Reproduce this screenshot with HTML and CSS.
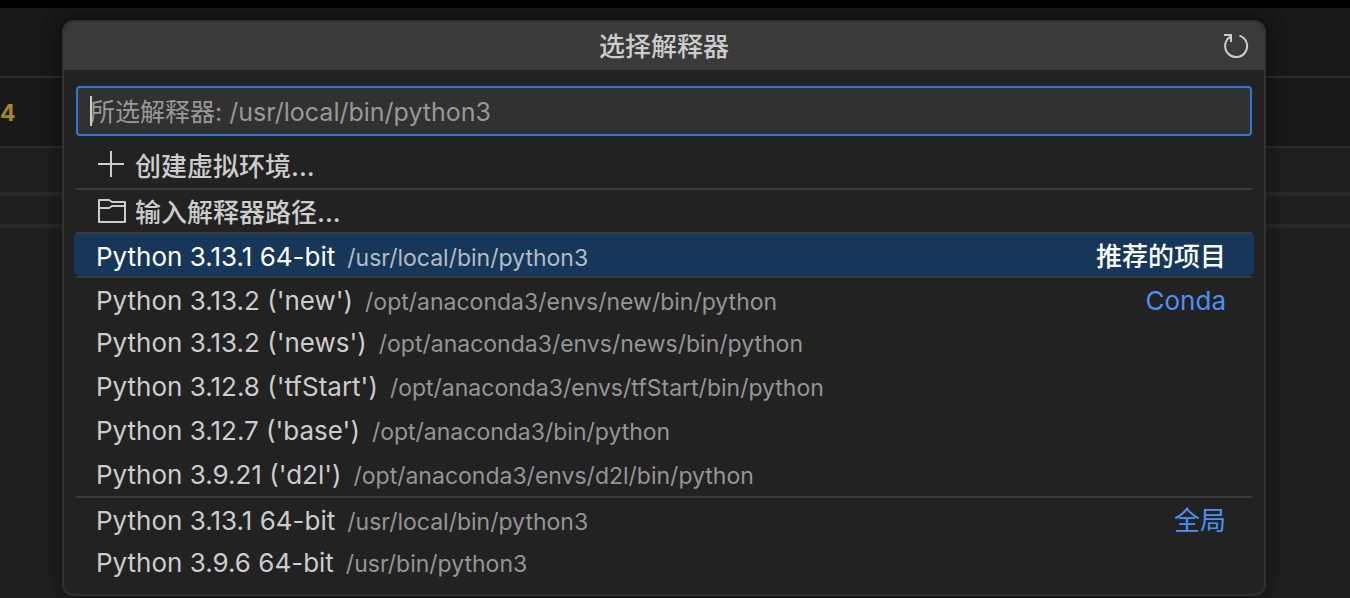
FILE: index.html
```html
<!DOCTYPE html>
<html lang="zh-CN">
<head>
  <meta charset="UTF-8">
  <title>选择解释器</title>
  <link rel="stylesheet" href="styles.css">
</head>
<body>
  <div class="editor">
    <div class="title-bar"></div>
    <div class="tab-bar"><span class="tab-badge">4</span></div>
    <div class="code-area">
      <div class="code-line"></div>
    </div>
  </div>

  <div class="overlay">
    <div class="quick-pick">
      <header class="pick-header">
        <h1 class="pick-title">选择解释器</h1>
        <button class="refresh-btn" aria-label="刷新">
          <svg width="28" height="28" viewBox="0 0 28 28" fill="none" stroke="currentColor" stroke-width="2">
            <path d="M17.5 3.6A11 11 0 1 1 8.5 4.6"/>
            <path d="M2 3H9V10"/>
          </svg>
        </button>
      </header>

      <div class="pick-filter">
        <input class="pick-input" type="text" placeholder="所选解释器: /usr/local/bin/python3" aria-label="所选解释器">
        <span class="caret"></span>
      </div>

      <ul class="pick-list">
        <li><button class="pick-row">
          <svg class="row-icon" width="30" height="30" viewBox="0 0 30 30" fill="none" stroke="currentColor" stroke-width="2">
            <path d="M15 0V26M2 13H28"/>
          </svg>
          <span class="label action">创建虚拟环境...</span>
        </button></li>
        <li><button class="pick-row separated">
          <svg class="row-icon" width="30" height="30" viewBox="0 0 30 30" fill="none" stroke="currentColor" stroke-width="2" stroke-linejoin="round">
            <path d="M3 4H13L16 6H29V26H3Z"/>
            <path d="M3 12H13L16 10H29"/>
          </svg>
          <span class="label action">输入解释器路径...</span>
        </button></li>
        <li><button class="pick-row separated selected">
          <span class="label">Python 3.13.1 64-bit</span>
          <span class="path">/usr/local/bin/python3</span>
          <span class="group">推荐的项目</span>
        </button></li>
        <li><button class="pick-row separated">
          <span class="label">Python 3.13.2 ('new')</span>
          <span class="path">/opt/anaconda3/envs/new/bin/python</span>
          <span class="group">Conda</span>
        </button></li>
        <li><button class="pick-row">
          <span class="label">Python 3.13.2 ('news')</span>
          <span class="path">/opt/anaconda3/envs/news/bin/python</span>
        </button></li>
        <li><button class="pick-row">
          <span class="label">Python 3.12.8 ('tfStart')</span>
          <span class="path">/opt/anaconda3/envs/tfStart/bin/python</span>
        </button></li>
        <li><button class="pick-row">
          <span class="label">Python 3.12.7 ('base')</span>
          <span class="path">/opt/anaconda3/bin/python</span>
        </button></li>
        <li><button class="pick-row">
          <span class="label">Python 3.9.21 ('d2l')</span>
          <span class="path">/opt/anaconda3/envs/d2l/bin/python</span>
        </button></li>
        <li><button class="pick-row separated">
          <span class="label">Python 3.13.1 64-bit</span>
          <span class="path">/usr/local/bin/python3</span>
          <span class="group">全局</span>
        </button></li>
        <li><button class="pick-row">
          <span class="label">Python 3.9.6 64-bit</span>
          <span class="path">/usr/bin/python3</span>
        </button></li>
      </ul>
    </div>
  </div>
</body>
</html>
```
FILE: styles.css
```css
* {
  box-sizing: border-box;
}

body {
  margin: 0;
  background: #1f1f1f;
  color: #cccccc;
  font-family: Inter, "Noto Sans CJK SC", sans-serif;
  font-size: 26px;
  overflow: hidden;
}

button,
input {
  font: inherit;
  color: inherit;
}

/* editor behind the picker */
.editor {
  display: flex;
  flex-direction: column;
  height: 100vh;
  border-top: 8px solid #000000;
}

.title-bar,
.tab-bar {
  height: 70px;
  background: #181818;
  border-bottom: 2px solid #2b2b2b;
}

.tab-bar {
  display: flex;
  align-items: center;
}

.tab-badge {
  padding-top: 2px;
  font-size: 23px;
  font-weight: bold;
  color: #a1882c;
}

.code-area {
  flex: 1;
  padding-top: 44px;
}

.code-line {
  height: 36px;
  border: solid #282828;
  border-width: 4px 0;
}

.overlay {
  position: absolute;
  top: 0;
  left: 0;
  right: 0;
  padding: 20px 84px 0 62px;
}

.quick-pick {
  background: #222222;
  border: 2px solid #313131;
  border-radius: 12px;
  box-shadow: 0 0 16px 4px rgba(0, 0, 0, 0.36);
  padding-bottom: 10px;
}

.pick-header {
  display: flex;
  align-items: center;
  height: 48px;
  padding: 0 14px 0 42px;
  background: #3a3a3a;
  border-radius: 10px 10px 0 0;
}

.pick-title {
  flex: 1;
  margin: 0;
  padding-top: 2px;
  font-size: 26px;
  font-weight: 500;
  line-height: 44px;
  text-align: center;
}

.refresh-btn {
  display: flex;
  padding: 0;
  border: none;
  background: none;
  cursor: pointer;
}

.pick-filter {
  position: relative;
  margin: 16px 12px 8px;
}

.pick-input {
  display: block;
  width: 100%;
  height: 50px;
  padding: 2px 12px 0;
  background: #313131;
  border: 2px solid #3376cd;
  border-radius: 4px;
  outline: none;
  font-size: 25px;
  caret-color: transparent;
}

.pick-input::placeholder {
  color: #989898;
  opacity: 1;
}

.caret {
  position: absolute;
  top: 10px;
  left: 14px;
  width: 2px;
  height: 30px;
  background: #cccccc;
}

.pick-list {
  list-style: none;
  margin: 0;
  padding: 0 10px;
}

.pick-row {
  position: relative;
  display: flex;
  align-items: baseline;
  width: 100%;
  height: 44px;
  padding: 0 28px 0 22px;
  border: none;
  background: none;
  line-height: 46px;
  text-align: left;
  white-space: nowrap;
  cursor: pointer;
}

.separated {
  padding-top: 2px;
}

.separated::before {
  content: "";
  position: absolute;
  top: 0;
  left: 2px;
  right: 2px;
  height: 2px;
  background: #3c3c3c;
  border-radius: 2px 2px 0 0;
}

.selected {
  background: #16375a;
  border-radius: 6px;
  color: #ffffff;
}

.row-icon {
  align-self: center;
  margin-right: 9px;
}

.action {
  font-weight: 500;
}

.path {
  margin-left: 12px;
  font-size: 23px;
  color: #959595;
}

.selected .path {
  color: #b3bcc8;
}

.group {
  margin-left: auto;
  color: #4f8ff5;
}

.selected .group {
  font-weight: 500;
  color: #ffffff;
}
```
